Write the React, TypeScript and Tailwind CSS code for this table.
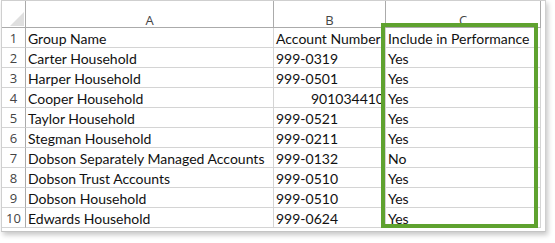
const rows: [string, string, string, boolean][] = [
  ['Group Name', 'Account Number', 'Include in Performance', false],
  ['Carter Household', '999-0319', 'Yes', false],
  ['Harper Household', '999-0501', 'Yes', false],
  ['Cooper Household', '901034410', 'Yes', true],
  ['Taylor Household', '999-0521', 'Yes', false],
  ['Stegman Household', '999-0211', 'Yes', false],
  ['Dobson Separately Managed Accounts', '999-0132', 'No', false],
  ['Dobson Trust Accounts', '999-0510', 'Yes', false],
  ['Dobson Household', '999-0510', 'Yes', false],
  ['Edwards Household', '999-0624', 'Yes', false],
];

const cell = "h-[20px] border-b border-r border-[#d4d4d4] flex items-end pb-[1px] leading-[15px] overflow-hidden whitespace-nowrap";
const head = "h-[27px] border-b border-r border-[#ababab] flex items-end justify-center pb-0 leading-[14px] text-[13px] text-[#444]";

export default function App() {
  return (
    <div className="w-[555px] h-[243px] bg-white pl-[1px]">
      <div className="relative w-[545px] border border-[#cfcfcf] border-b-[#c4c4c4] pb-[3px] bg-white shadow-[2px_3px_5px_rgba(0,0,0,0.22)]">
        <div
          className="grid grid-cols-[24px_248px_112px_155px] text-[14px] text-[#111]"
          style={{ fontFamily: 'Lato, "Open Sans", sans-serif' }}
        >
          <div className={head + " justify-end pr-[1px] pb-[1px]"}>
            <svg width="14" height="14" viewBox="0 0 14 14">
              <polygon points="14,0 14,14 0,14" fill="#dfdfdf" />
            </svg>
          </div>
          {['A', 'B', 'C'].map((l) => (
            <div key={l} className={head} style={{ fontFamily: '"Open Sans", "Noto Sans", sans-serif' }}>
              {l}
            </div>
          ))}
          {rows.map(([a, b, c, num], i) => (
            <div key={i} className="contents">
              <div
                className={cell + " justify-center text-[13px] text-[#444] border-r-[#ababab]"}
                style={{ fontFamily: '"Open Sans", "Noto Sans", sans-serif' }}
              >
                {i + 1}
              </div>
              <div className={cell + " pl-[2px]"}>{a}</div>
              <div className={cell + (num ? " justify-end pr-[1px]" : " pl-[2px]")}>{b}</div>
              <div className={cell + " pl-[2px]"}>{c}</div>
            </div>
          ))}
        </div>
        <div className="absolute left-[379px] top-[22px] w-[157px] h-[205px] border-4 border-[#5fa22f]" />
      </div>
    </div>
  );
}
